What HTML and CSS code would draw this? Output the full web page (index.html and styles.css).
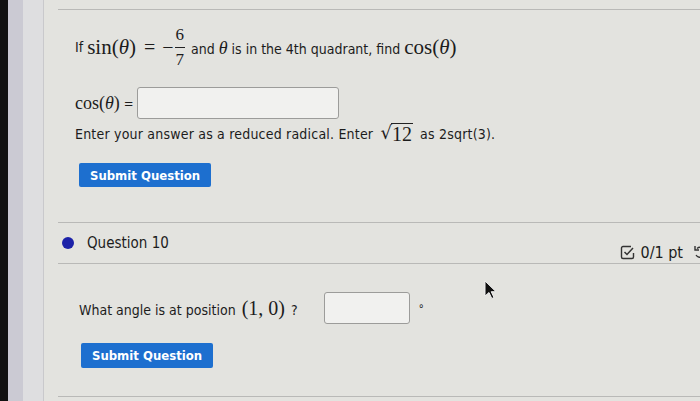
FILE: index.html
```html
<!DOCTYPE html>
<html lang="en">
<head>
    <meta charset="UTF-8">
    <title>Questions</title>
    <link rel="stylesheet" href="styles.css">
</head>
<body>
    <div class="screen">
        <div class="bezel"></div>
        <div class="side-strip"></div>
        <div class="gutter"></div>

        <div class="main">
            <!-- Question 9 (header scrolled off) -->
            <div class="question q9">
                <div class="prompt">
                    <span>If</span>
                    <span class="math lg"><span class="fn">sin</span>(<i>θ</i>)</span>
                    <span class="math op">=</span>
                    <span class="math minus">−</span>
                    <span class="frac"><span class="num">6</span><span class="den">7</span></span>
                    <span>and <i class="math">θ</i> is in the 4th quadrant, find <span class="math lg"><span class="fn">cos</span>(<i>θ</i>)</span></span>
                </div>

                <div class="answer-row">
                    <span class="math"><span class="fn">cos</span>(<i>θ</i>)</span>
                    <span class="eq">=</span>
                    <div class="input wide"></div>
                </div>

                <p class="hint">Enter your answer as a reduced radical. Enter <span class="math sqrt"><span class="rad">√</span><span class="radicand">12</span></span> as 2sqrt(3).</p>

                <button class="submit">Submit Question</button>
            </div>

            <!-- Question 10 -->
            <div class="q-header">
                <span class="dot"></span>
                <span class="q-title">Question 10</span>
                <span class="score">
                    <svg width="15" height="15" viewBox="0 0 15 15">
                        <path d="M11 1.5H3A1.5 1.5 0 0 0 1.5 3v9A1.5 1.5 0 0 0 3 13.5h9A1.5 1.5 0 0 0 13.5 12V8" fill="none" stroke="#333" stroke-width="1.4"/>
                        <path d="M4.5 7l2.5 2.5 6-6.5" fill="none" stroke="#333" stroke-width="1.5"/>
                    </svg>
                    0/1 pt
                    <svg class="retry" width="12" height="15" viewBox="0 0 12 15">
                        <path d="M3 3.5A5 5 0 1 1 2 10" fill="none" stroke="#333" stroke-width="1.4"/>
                        <path d="M1 1v4h4" fill="none" stroke="#333" stroke-width="1.4"/>
                    </svg>
                </span>
            </div>

            <div class="question q10">
                <div class="answer-row">
                    <span>What angle is at position <span class="math big">(1, 0)</span> ?</span>
                    <div class="input small"></div>
                    <span class="degree">∘</span>
                </div>

                <button class="submit">Submit Question</button>
            </div>
        </div>
    </div>

    <!-- mouse pointer over the page -->
    <svg class="pointer" width="14" height="20" viewBox="0 0 14 20">
        <path d="M1 1v15l4-3.5 2.8 6 2.2-1-2.8-5.8H12z" fill="#111" stroke="#eee" stroke-width="1"/>
    </svg>
</body>
</html>
```

FILE: styles.css
```css
body {
    margin: 0;
    background-color: #e3e3df;
    font-family: 'DejaVu Sans Condensed', 'DejaVu Sans', sans-serif;
    font-stretch: condensed;
    font-size: 14px;
    color: #1c1c1c;
    overflow: hidden;
}

.screen {
    display: flex;
    height: 401px;
}

/* left edge of the monitor / browser sidebar */
.bezel {
    width: 8px;
    background-color: #111;
}

.side-strip {
    width: 15px;
    background-color: #cbcad3;
}

.gutter {
    width: 20px;
    background-color: #dedee0;
    border-right: 1px solid #c9c9cc;
}

.main {
    flex: 1;
    padding-top: 9px;
    padding-left: 14px;
}

.math {
    font-family: 'Liberation Serif', 'DejaVu Serif', serif;
    font-size: 18px;
    font-stretch: normal;
}

.math.lg {
    font-size: 21px;
}

.math i, i.math {
    font-style: italic;
}

/* Question 9 */
.question {
    padding-left: 17px;
}

.q9 {
    border-top: 1px solid #b9b9b7;
    padding-bottom: 35px;
}

.prompt {
    display: flex;
    align-items: center;
    gap: 4px;
    height: 46px;
    margin-top: 14px;
}

.op {
    font-size: 20px;
    margin: 0 3px 0 4px;
}

.minus {
    font-size: 20px;
    margin-right: -3px;
}

.frac {
    display: inline-flex;
    flex-direction: column;
    align-items: center;
    font-family: 'Liberation Serif', serif;
    font-size: 17px;
    line-height: 18px;
    margin-right: 2px;
}

.frac .num {
    border-bottom: 1px solid #222;
    padding: 0 1px 3px;
}

.frac .den {
    padding-top: 3px;
}

.answer-row {
    display: flex;
    align-items: center;
    height: 32px;
    margin-top: 17px;
}

.eq {
    margin: 0 3px 0 4px;
    font-size: 13px;
}

.input {
    height: 30px;
    background-color: #f1f1ef;
    border: 1px solid #9c9c9a;
    border-radius: 3px;
}

.input.wide {
    width: 200px;
}

.input.small {
    width: 84px;
    margin-left: 26px;
}

.hint {
    margin: 3px 0 0;
    line-height: 22px;
    letter-spacing: 0.2px;
}

.sqrt {
    display: inline-flex;
    align-items: flex-end;
    margin: 0 3px;
    font-size: 20px;
    letter-spacing: 0;
}

.rad {
    font-family: 'DejaVu Serif', serif;
    font-size: 18px;
    margin-right: -1px;
}

.radicand {
    border-top: 1px solid #222;
    line-height: 20px;
    padding: 0 1px;
}

.submit {
    display: block;
    margin-top: 18px;
    margin-left: 4px;
    padding: 0 11px;
    height: 24px;
    background-color: #1d6fcf;
    color: #fff;
    border: none;
    border-radius: 2px;
    font-family: inherit;
    font-stretch: condensed;
    font-size: 13px;
    font-weight: bold;
}

/* Question 10 header */
.q-header {
    display: flex;
    align-items: center;
    height: 40px;
    padding-left: 4px;
    border-top: 1px solid #b9b9b7;
    border-bottom: 1px solid #b9b9b7;
}

.dot {
    width: 12px;
    height: 12px;
    border-radius: 50%;
    background-color: #1c22a8;
    margin-right: 13px;
}

.q-title {
    font-size: 15px;
}

.score {
    display: flex;
    align-items: center;
    gap: 5px;
    margin-left: auto;
    margin-top: 18px;
    font-size: 16px;
}

.retry {
    margin-left: 6px;
    margin-right: -6px;
}

.q10 {
    padding-top: 28px;
    padding-bottom: 28px;
    border-bottom: 1px solid #b9b9b7;
}

.q10 .answer-row {
    margin-top: 0;
    padding-left: 4px;
}

.big {
    font-size: 20px;
    margin: 0 2px;
}

.degree {
    font-size: 12px;
    margin-left: 8px;
    margin-top: -4px;
}

.q10 .submit {
    margin-top: 19px;
    margin-left: 6px;
    height: 25px;
}

.pointer {
    position: absolute;
    left: 484px;
    top: 280px;
}
```
